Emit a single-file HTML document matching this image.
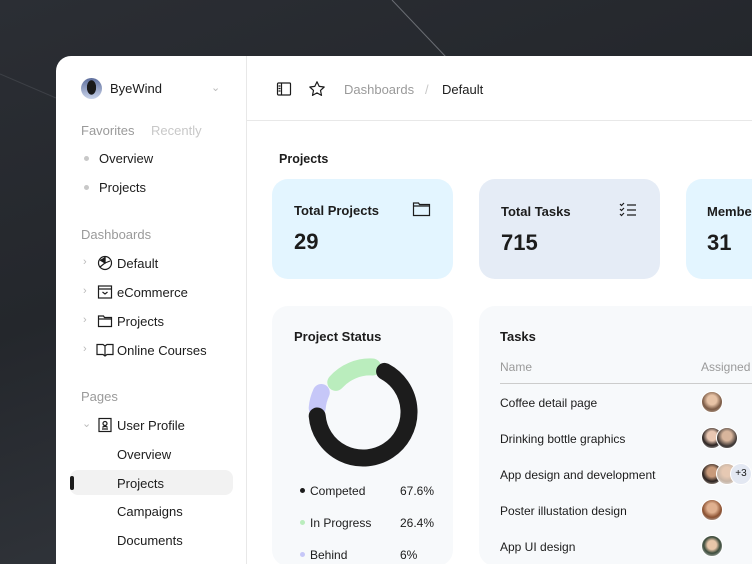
<!DOCTYPE html>
<html><head><meta charset="utf-8"><style>
*{margin:0;padding:0;box-sizing:border-box}
body{width:752px;height:564px;overflow:hidden;background:linear-gradient(160deg,#2b2e34,#24272c 40%,#3a3e45);font-family:"Liberation Sans",sans-serif;position:relative;color:#1c1c1c}
.abs{position:absolute}
.win{left:56px;top:56px;width:696px;height:508px;background:#fff;border-radius:15px 0 0 0;overflow:hidden}
.side{left:0;top:0;width:191px;height:508px;border-right:1px solid #e8e8e8}
.t{position:absolute;font-size:13px;white-space:nowrap}
.g{color:#9a9a9a}
.lg{color:#c8c8c8}
.dot{position:absolute;width:5px;height:5px;border-radius:50%;background:#c8c8c8}
.chev{position:absolute;color:#bbb;font-size:11px}
.card{position:absolute;border-radius:16px}
.ct{position:absolute;font-size:13px;font-weight:bold;white-space:nowrap}
.num{position:absolute;font-size:22px;font-weight:bold}
svg{position:absolute}
.row{position:absolute;left:21px;font-size:12px;white-space:nowrap}
.av{position:absolute;width:22px;height:22px;border-radius:50%;border:1px solid #fff}
</style></head><body>
<svg class="abs" style="left:0;top:0" width="752" height="564"><line x1="392" y1="0" x2="446" y2="57" stroke="#6a6d73" stroke-width="1"/><line x1="0" y1="74" x2="56" y2="98" stroke="#3d4046" stroke-width="1"/></svg>
<div class="abs win">
 <div class="abs side">
  <div class="abs" style="left:25px;top:22px;width:21px;height:21px;border-radius:50%;background:radial-gradient(ellipse 35% 55% at 50% 45%,#1a1a1a 60%,transparent 65%),linear-gradient(#5d6e9c,#c9d3ea)"></div>
  <div class="t" style="left:54px;top:25px">ByeWind</div>
  <div class="chev" style="left:155px;top:25px">&#8964;</div>
  <div class="t g" style="left:25px;top:67px">Favorites</div>
  <div class="t lg" style="left:95px;top:67px">Recently</div>
  <div class="dot" style="left:28px;top:100px"></div><div class="t" style="left:43px;top:95px">Overview</div>
  <div class="dot" style="left:28px;top:129px"></div><div class="t" style="left:43px;top:124px">Projects</div>
  <div class="t g" style="left:25px;top:171px">Dashboards</div>
  <div class="chev" style="left:27px;top:200px">&#8250;</div>
  <svg style="left:41px;top:199px" width="16" height="16" viewBox="0 0 16 16" fill="none" stroke="#1c1c1c" stroke-width="1.2"><circle cx="8" cy="8" r="6.5"/><path d="M8 1.5V8L3 12M8 8l5-2"/><path d="M8 2v6L3 5" fill="#1c1c1c"/></svg>
  <div class="t" style="left:61px;top:200px">Default</div>
  <div class="chev" style="left:27px;top:229px">&#8250;</div>
  <svg style="left:41px;top:228px" width="16" height="16" viewBox="0 0 16 16" fill="none" stroke="#1c1c1c" stroke-width="1.2"><rect x="1.5" y="2" width="13" height="12"/><path d="M1.5 5h13M5.5 8l2.5 2 2.5-2"/></svg>
  <div class="t" style="left:61px;top:229px">eCommerce</div>
  <div class="chev" style="left:27px;top:258px">&#8250;</div>
  <svg style="left:41px;top:257px" width="16" height="16" viewBox="0 0 16 16" fill="none" stroke="#1c1c1c" stroke-width="1.2"><path d="M1.5 3h5l1 1.5h7v9h-13zM1.5 6h13"/></svg>
  <div class="t" style="left:61px;top:258px">Projects</div>
  <div class="chev" style="left:27px;top:287px">&#8250;</div>
  <svg style="left:40px;top:286px" width="18" height="16" viewBox="0 0 18 16" fill="none" stroke="#1c1c1c" stroke-width="1.2"><path d="M1 2.5h6l2 1.5 2-1.5h6v10h-6l-2 1.5-2-1.5H1zM9 4v10"/></svg>
  <div class="t" style="left:61px;top:287px">Online Courses</div>
  <div class="t g" style="left:25px;top:333px">Pages</div>
  <div class="chev" style="left:26px;top:361px">&#8964;</div>
  <svg style="left:41px;top:361px" width="16" height="16" viewBox="0 0 16 16" fill="none" stroke="#1c1c1c" stroke-width="1.2"><rect x="2" y="1.5" width="12" height="13"/><circle cx="8" cy="6.5" r="2"/><path d="M5 12h6M5.5 10.5c1-1.5 4-1.5 5 0"/></svg>
  <div class="t" style="left:61px;top:362px">User Profile</div>
  <div class="t" style="left:61px;top:391px">Overview</div>
  <div class="abs" style="left:14px;top:414px;width:163px;height:25px;border-radius:8px;background:#f2f2f2"></div>
  <div class="abs" style="left:14px;top:420px;width:4px;height:14px;border-radius:2px;background:#1c1c1c"></div>
  <div class="t" style="left:61px;top:420px">Projects</div>
  <div class="t" style="left:61px;top:448px">Campaigns</div>
  <div class="t" style="left:61px;top:477px">Documents</div>
 </div>
 <div class="abs" style="left:191px;top:64px;width:505px;height:1px;background:#e8e8e8"></div>
 <svg style="left:220px;top:25px" width="16" height="16" viewBox="0 0 16 16" fill="none" stroke="#1c1c1c" stroke-width="1.2"><rect x="1.5" y="2" width="13" height="12" rx="1"/><path d="M5.5 2v12M2.5 5h2M2.5 7.5h2M2.5 10h2"/></svg>
 <svg style="left:252px;top:24px" width="18" height="18" viewBox="0 0 18 18" fill="none" stroke="#1c1c1c" stroke-width="1.2" stroke-linejoin="round"><path d="M9 1.8l2.2 4.6 5 .6-3.7 3.4 1 5-4.5-2.5-4.5 2.5 1-5L1.8 7l5-.6z"/></svg>
 <div class="t g" style="left:288px;top:26px">Dashboards</div>
 <div class="t lg" style="left:369px;top:26px">/</div>
 <div class="t" style="left:386px;top:26px">Default</div>
 <div class="ct" style="left:223px;top:96px;font-size:12.5px">Projects</div>
 <div class="card" style="left:216px;top:123px;width:181px;height:100px;background:#e3f5ff"></div>
 <div class="ct" style="left:238px;top:147px">Total Projects</div>
 <svg style="left:356px;top:145px" width="19" height="16" viewBox="0 0 19 16" fill="none" stroke="#1c1c1c" stroke-width="1.2"><path d="M1.5 2h5l1 1.5h10v11h-16zM1.5 5h16"/></svg>
 <div class="num" style="left:238px;top:173px">29</div>
 <div class="card" style="left:423px;top:123px;width:181px;height:100px;background:#e5ecf6"></div>
 <div class="ct" style="left:445px;top:148px">Total Tasks</div>
 <svg style="left:563px;top:146px" width="18" height="16" viewBox="0 0 18 16" fill="none" stroke="#1c1c1c" stroke-width="1.2"><path d="M1 2l1.5 1.5L5 1M1 7l1.5 1.5L5 6M1 12l1.5 1.5L5 11M8 3h9M8 8h9M8 13h9"/></svg>
 <div class="num" style="left:445px;top:174px">715</div>
 <div class="card" style="left:630px;top:123px;width:66px;height:100px;background:#e3f5ff;border-radius:16px 0 0 16px"></div>
 <div class="ct" style="left:651px;top:148px">Membe</div>
 <div class="num" style="left:651px;top:174px">31</div>
 <div class="card" style="left:216px;top:250px;width:181px;height:260px;background:#f7f9fb"></div>
 <div class="ct" style="left:238px;top:273px">Project Status</div>
 <svg style="left:216px;top:250px" width="181" height="200" fill="none" stroke-width="17" stroke-linecap="round">
  <path d="M45.2 102 A46 46 0 0 1 49.3 86.5" stroke="#c6c7f8"/>
  <path d="M63.8 76.4 A46 46 0 0 1 100.6 61.0" stroke="#baedbd"/>
  <path d="M112.6 65.4 A46 46 0 1 1 45.2 110.0" stroke="#1c1c1c"/>
 </svg>
 <div class="dot" style="left:244px;top:432px;background:#1c1c1c"></div><div class="row" style="left:254px;top:428px">Competed</div><div class="row" style="left:344px;top:428px">67.6%</div>
 <div class="dot" style="left:244px;top:464px;background:#baedbd"></div><div class="row" style="left:254px;top:460px">In Progress</div><div class="row" style="left:344px;top:460px">26.4%</div>
 <div class="dot" style="left:244px;top:496px;background:#c6c7f8"></div><div class="row" style="left:254px;top:492px">Behind</div><div class="row" style="left:344px;top:492px">6%</div>
 <div class="card" style="left:423px;top:250px;width:273px;height:260px;background:#f7f9fb;border-radius:16px 0 0 16px"></div>
 <div class="ct" style="left:444px;top:273px">Tasks</div>
 <div class="row g" style="left:444px;top:304px">Name</div>
 <div class="row g" style="left:645px;top:304px">Assigned</div>
 <div class="abs" style="left:444px;top:327px;width:252px;height:1px;background:#ccc"></div>
 <div class="row" style="left:444px;top:340px">Coffee detail page</div>
 <div class="row" style="left:444px;top:376px">Drinking bottle graphics</div>
 <div class="row" style="left:444px;top:412px">App design and development</div>
 <div class="row" style="left:444px;top:448px">Poster illustation design</div>
 <div class="row" style="left:444px;top:484px">App UI design</div>
 <div class="av" style="left:645px;top:335px;background:radial-gradient(circle at 50% 40%,#e7c3a6 30%,#7a5a45 60%,#c9b8a8)"></div>
 <div class="av" style="left:645px;top:371px;background:radial-gradient(circle at 50% 40%,#e9c7b2 30%,#2a2220 60%,#ddd)"></div>
 <div class="av" style="left:660px;top:371px;background:radial-gradient(circle at 50% 40%,#d8b59c 30%,#3a3432 65%,#aaa)"></div>
 <div class="av" style="left:645px;top:407px;background:radial-gradient(circle at 50% 40%,#c89a7a 30%,#2a2220 60%,#e8d8c4)"></div>
 <div class="av" style="left:660px;top:407px;background:radial-gradient(circle at 50% 40%,#e6c9b3 30%,#c7b5a6 60%,#eee)"></div>
 <div class="av" style="left:674px;top:407px;background:#e3e8f2;font-size:10px;text-align:center;line-height:20px">+3</div>
 <div class="av" style="left:645px;top:443px;background:radial-gradient(circle at 50% 40%,#e0b08f 30%,#8a5030 60%,#cfe0ea)"></div>
 <div class="av" style="left:645px;top:479px;background:radial-gradient(circle at 50% 45%,#e8c6a9 30%,#3a4a3a 55%,#eee)"></div>
</div>
</body></html>
